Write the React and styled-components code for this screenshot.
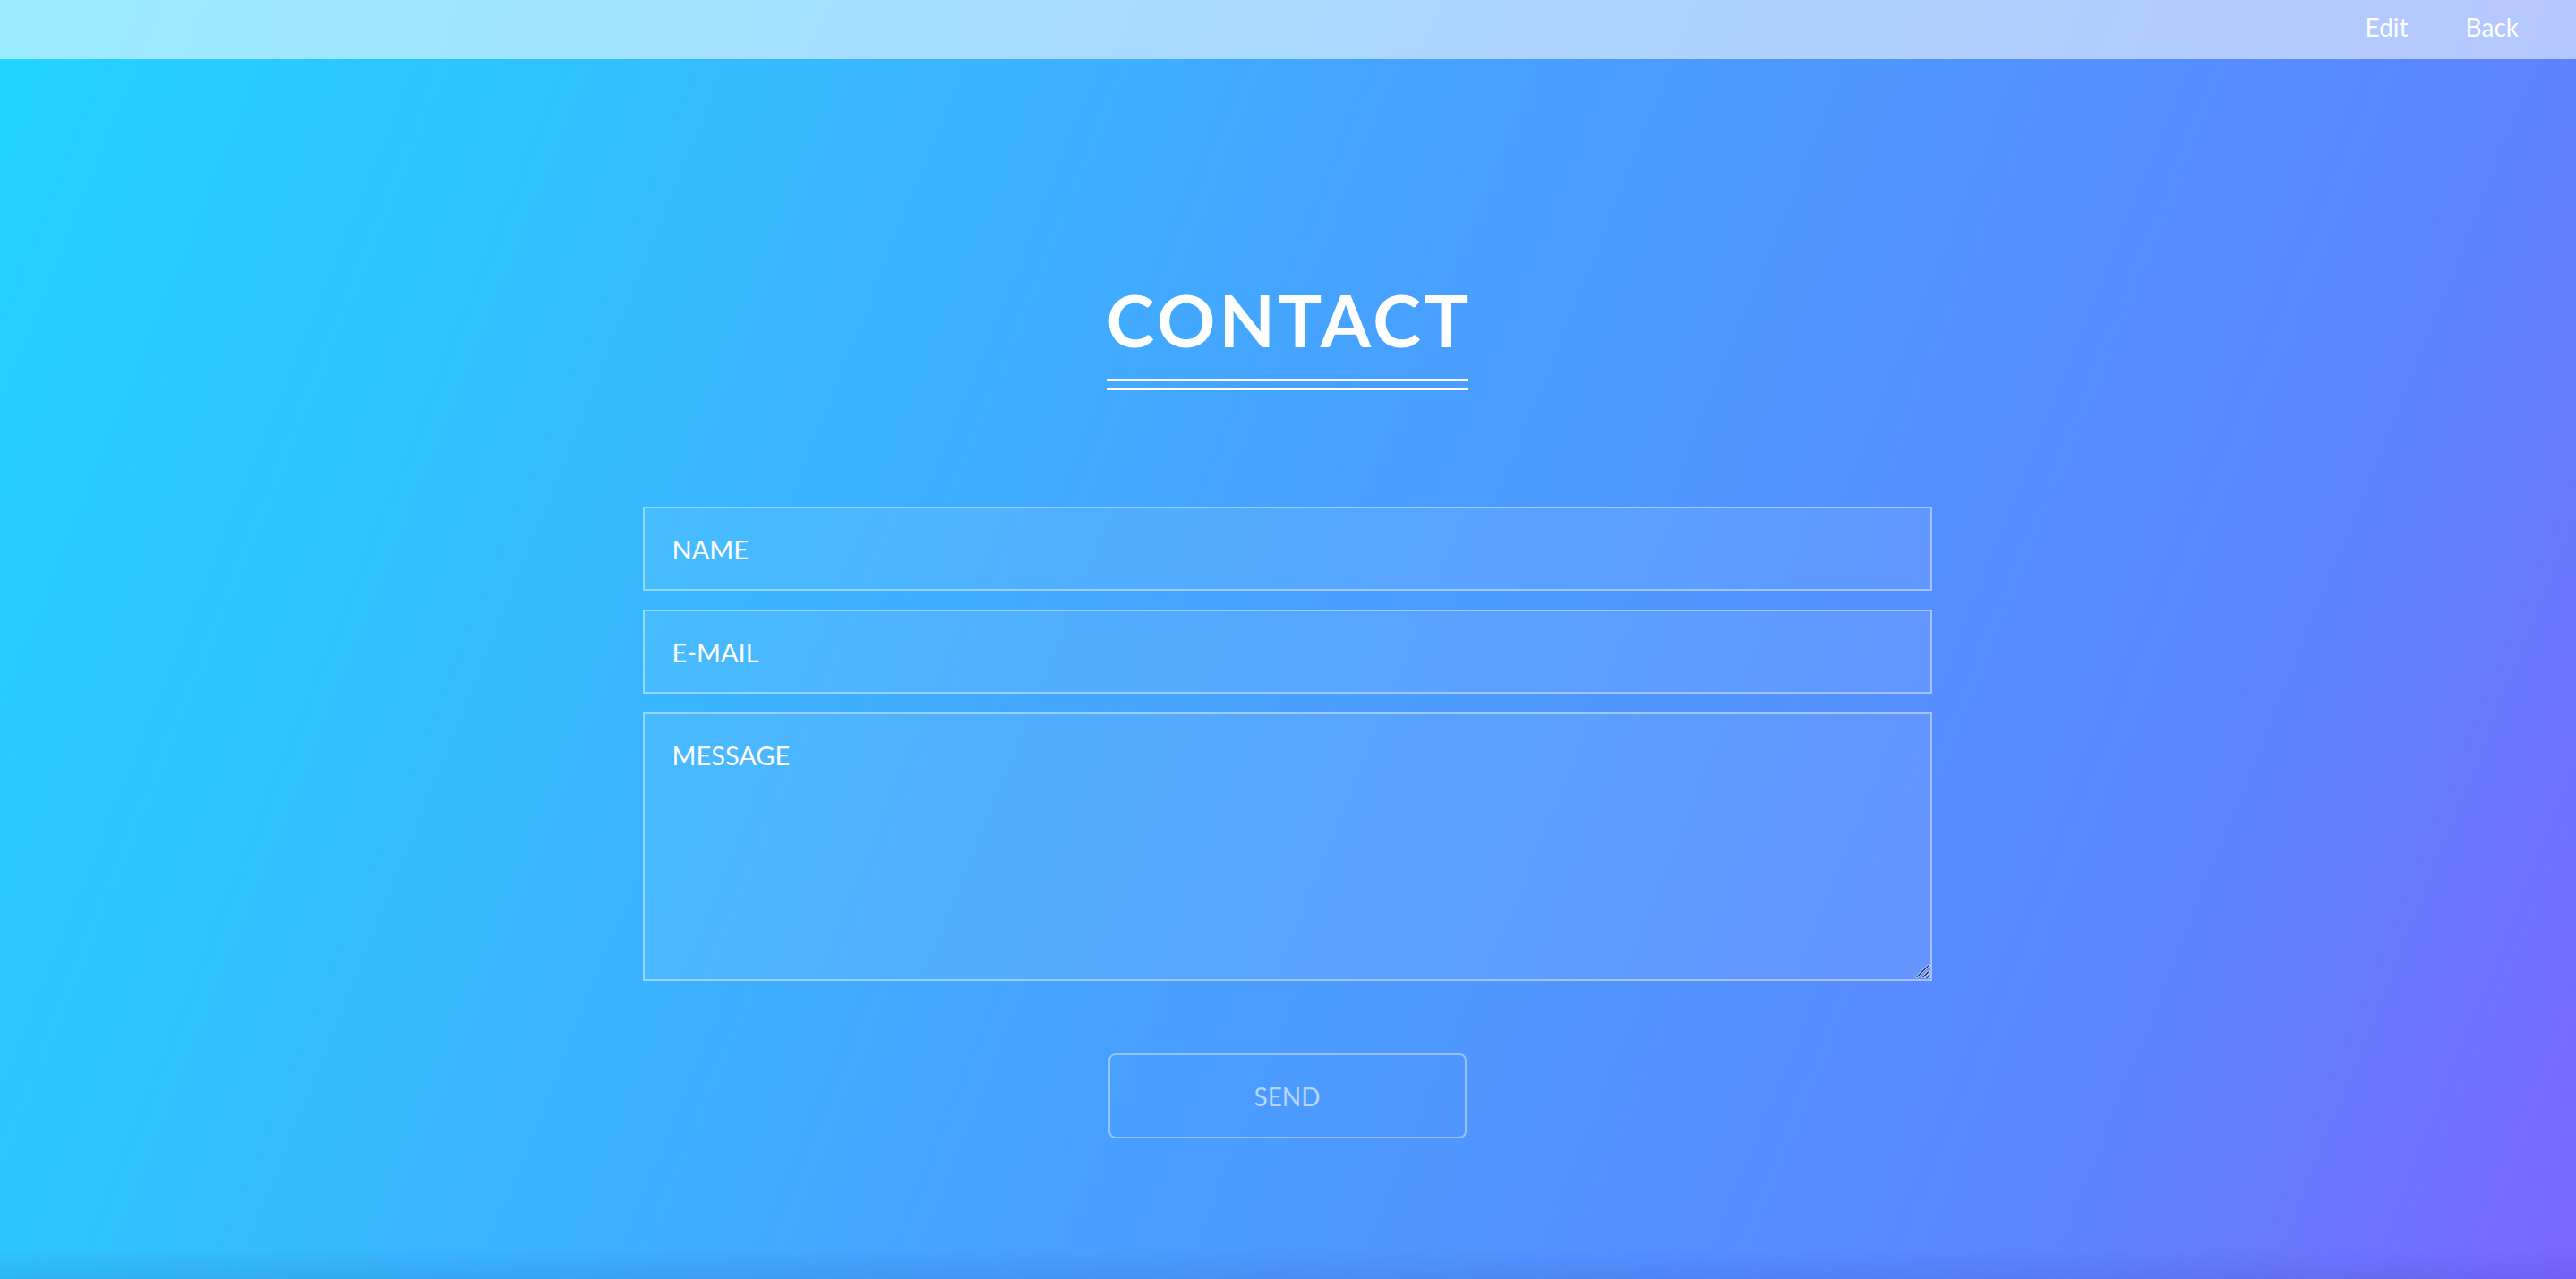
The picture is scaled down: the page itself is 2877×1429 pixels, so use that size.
import React from 'react';
import styled, { createGlobalStyle } from 'styled-components';

const GlobalStyle = createGlobalStyle`
  html, body {
    margin: 0;
    padding: 0;
  }

  body {
    font-family: Lato, "Open Sans", "Liberation Sans", sans-serif;
    color: #fff;
  }

  * {
    box-sizing: border-box;
  }
`;

const Page = styled.div`
  min-height: 100vh;
  display: flex;
  flex-direction: column;
  background:
    linear-gradient(to top, rgba(30, 40, 140, 0.1), rgba(30, 40, 140, 0) 34px),
    linear-gradient(112deg, #22d4ff 0%, #2ec4ff 17%, #48a0ff 50%, #5c84ff 83%, #7a66ff 100%);
`;

const TopBar = styled.nav`
  height: 66px;
  display: flex;
  justify-content: flex-end;
  align-items: center;
  gap: 64px;
  padding: 0 64px 6px 0;
  background-color: rgba(255, 255, 255, 0.55);
`;

const NavLink = styled.a`
  color: #fff;
  font-size: 28px;
  font-weight: 400;
  text-decoration: none;
  cursor: pointer;
`;

const Main = styled.main`
  display: flex;
  flex-direction: column;
  align-items: center;
  padding-top: 250px;
`;

const Heading = styled.div`
  display: flex;
  flex-direction: column;
  align-items: center;
  margin-right: 2px;
`;

const Title = styled.h1`
  margin: 0 0 0 4px;
  font-size: 81px;
  line-height: 1;
  font-weight: 700;
  letter-spacing: 4px;
  text-transform: uppercase;
`;

const DoubleRule = styled.span`
  display: block;
  width: 404px;
  height: 12px;
  margin-top: 27px;
  border-top: 2px solid #fff;
  border-bottom: 2px solid #fff;
`;

const Form = styled.form`
  width: 1440px;
  margin: 130px 2px 0 0;
  display: flex;
  flex-direction: column;
  align-items: center;
  gap: 21px;
`;

const fieldStyles = `
  width: 100%;
  border: 2px solid rgba(255, 255, 255, 0.42);
  background-color: rgba(255, 255, 255, 0.08);
  color: #fff;
  font-family: Lato, "Open Sans", "Liberation Sans", sans-serif;
  font-size: 29px;
  outline: none;
  border-radius: 0;

  &::placeholder {
    color: #fff;
    opacity: 1;
  }
`;

const Input = styled.input`
  ${fieldStyles}
  height: 94px;
  padding: 0 31px;
`;

const MessageBox = styled.div`
  position: relative;
  width: 100%;
`;

const TextArea = styled.textarea`
  ${fieldStyles}
  display: block;
  height: 300px;
  padding: 28px 31px;
  resize: vertical;
`;

const Grip = styled.svg`
  position: absolute;
  right: 3px;
  bottom: 3px;
  width: 16px;
  height: 16px;
  pointer-events: none;
`;

const SendButton = styled.button`
  width: 400px;
  height: 95px;
  margin-top: 60px;
  border: 2px solid rgba(255, 255, 255, 0.4);
  border-radius: 8px;
  background: transparent;
  color: rgba(255, 255, 255, 0.62);
  font-family: Lato, "Open Sans", "Liberation Sans", sans-serif;
  font-size: 28px;
  text-transform: uppercase;
  cursor: pointer;
`;

const ResizeGrip = () => (
  <Grip viewBox="0 0 16 16">
    <g strokeLinecap="round">
      <path d="M2 14.5 L14.5 2" stroke="rgba(255,255,255,0.7)" strokeWidth="3" />
      <path d="M9 14.5 L14.5 9" stroke="rgba(255,255,255,0.7)" strokeWidth="3" />
      <path d="M2 14.5 L14.5 2" stroke="#1c2a58" strokeWidth="1.4" />
      <path d="M9 14.5 L14.5 9" stroke="#1c2a58" strokeWidth="1.4" />
    </g>
  </Grip>
);

const App = () => (
  <>
    <GlobalStyle />
    <Page>
      <TopBar>
        <NavLink>Edit</NavLink>
        <NavLink>Back</NavLink>
      </TopBar>
      <Main>
        <Heading>
          <Title>Contact</Title>
          <DoubleRule />
        </Heading>
        <Form onSubmit={(e) => e.preventDefault()}>
          <Input type="text" placeholder="NAME" />
          <Input type="email" placeholder="E-MAIL" />
          <MessageBox>
            <TextArea placeholder="MESSAGE" />
            <ResizeGrip />
          </MessageBox>
          <SendButton type="submit">Send</SendButton>
        </Form>
      </Main>
    </Page>
  </>
);

export default App;
